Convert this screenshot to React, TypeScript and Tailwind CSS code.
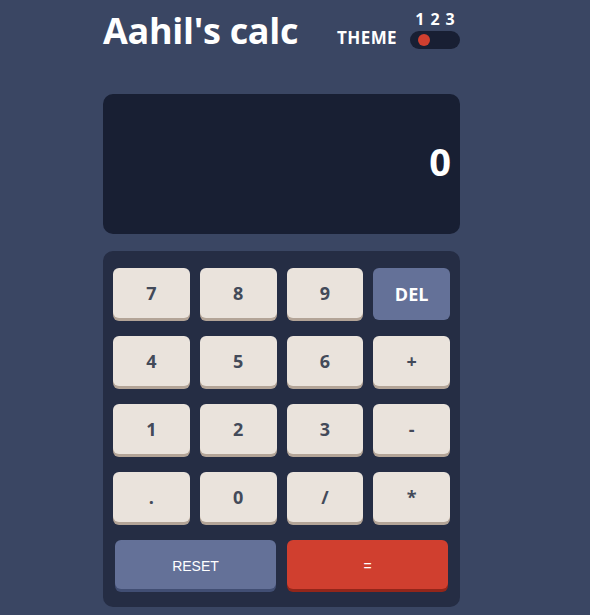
const keys = ['7', '8', '9', 'DEL', '4', '5', '6', '+', '1', '2', '3', '-', '.', '0', '/', '*'];

export default function App() {
  return (
    <div className="min-h-screen bg-[#3a4663] font-['Open_Sans',sans-serif]">
      <div className="w-[357px] ml-[103px] pt-[4px]">
        {/* Header */}
        <div className="flex items-end justify-between h-[45px]">
          <h1 className="text-[36px] leading-none font-bold text-white tracking-[-0.3px]">Aahil's calc</h1>
          <div className="flex items-end gap-[13px]">
            <span className="text-[17px] leading-none font-bold text-white pb-[3px] tracking-[0.4px]">THEME</span>
            <div className="flex flex-col items-center">
              <div className="flex gap-[6px] text-[16px] leading-none font-bold text-white mb-[4px]">
                <span>1</span>
                <span>2</span>
                <span>3</span>
              </div>
              <div className="w-[50px] h-[18px] rounded-full bg-[#181f33] flex items-center px-[8px]">
                <span className="w-[12px] h-[12px] rounded-full bg-[#d03f2f]" />
              </div>
            </div>
          </div>
        </div>

        {/* Display */}
        <div className="mt-[45px] h-[140px] rounded-[10px] bg-[#181f33] flex items-center justify-end px-[9px] pb-[6px]">
          <span className="text-[38px] font-bold text-white leading-none">0</span>
        </div>

        {/* Keypad */}
        <div className="mt-[17px] rounded-[10px] bg-[#252d44] px-[10px] pt-[17px] pb-[18px]">
          <div className="grid grid-cols-4 gap-x-[10px] gap-y-[16px]">
            {keys.map((k) =>
              k === 'DEL' ? (
                <button key={k} className="h-[52px] rounded-[6px] bg-[#647198] text-white text-[18px] font-bold">
                  {k}
                </button>
              ) : (
                <button
                  key={k}
                  className="h-[50px] mb-[2px] rounded-[6px] bg-[#eae3dc] shadow-[0_3px_0_#b3a497] text-[#434a59] text-[18px] font-bold"
                >
                  {k}
                </button>
              )
            )}
          </div>
          <div className="grid grid-cols-2 gap-x-[11px] mt-[16px] px-[2px]">
            <button className="h-[49px] pt-[3px] rounded-[6px] bg-[#647198] shadow-[0_3px_0_#414e73] text-white text-[14px] font-['Liberation_Sans',sans-serif]">
              RESET
            </button>
            <button className="h-[49px] pt-[3px] rounded-[6px] bg-[#d03f2f] shadow-[0_3px_0_#93261a] text-white text-[14px] font-['Liberation_Sans',sans-serif]">
              =
            </button>
          </div>
        </div>
      </div>
    </div>
  );
}
